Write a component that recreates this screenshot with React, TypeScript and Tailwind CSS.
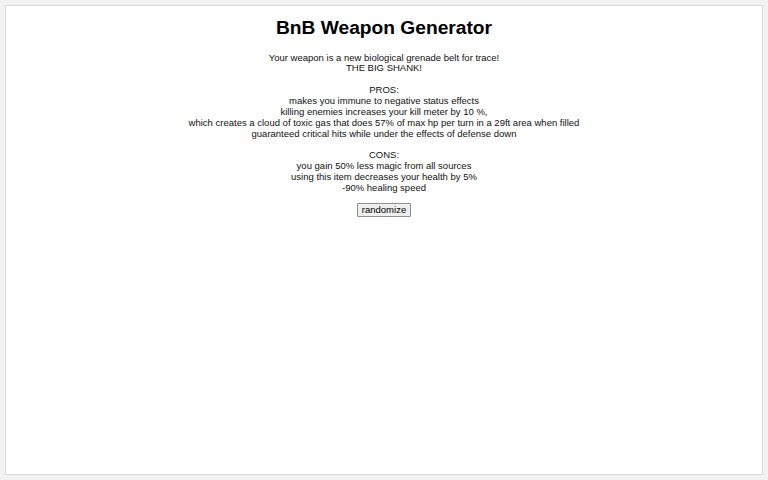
import React, { useState } from "react";

interface Weapon {
  intro: string;
  name: string;
  pros: string[];
  cons: string[];
}

const initialWeapon: Weapon = {
  intro: "Your weapon is a new biological grenade belt for trace!",
  name: "THE BIG SHANK!",
  pros: [
    "makes you immune to negative status effects",
    "killing enemies increases your kill meter by 10 %,",
    "which creates a cloud of toxic gas that does 57% of max hp per turn in a 29ft area when filled",
    "guaranteed critical hits while under the effects of defense down",
  ],
  cons: [
    "you gain 50% less magic from all sources",
    "using this item decreases your health by 5%",
    "-90% healing speed",
  ],
};

export default function App() {
  const [weapon, setWeapon] = useState<Weapon>(initialWeapon);

  // Shuffle the pros/cons order so the button does something visible
  const randomize = () => {
    setWeapon(prev => ({
      ...prev,
      pros: [...prev.pros].sort(() => Math.random() - 0.5),
      cons: [...prev.cons].sort(() => Math.random() - 0.5),
    }));
  };

  return (
    <div className="min-h-screen bg-[#f2f2f2] p-[5px] font-['Liberation_Sans',Arial,sans-serif] text-black">
      <div className="h-[470px] bg-white border border-[#dcdcdc] text-center">
        <h1 className="mt-[11px] mb-[13.6px] text-[19.2px] leading-[22px] font-bold">
          BnB Weapon Generator
        </h1>

        <div className="text-[9.5px] leading-[10.85px] text-[#111]">
          <div>{weapon.intro}</div>
          <div>{weapon.name}</div>
          <div className="h-[10.85px]"></div>
          <div>PROS:</div>
          {weapon.pros.map(p => (
            <div key={p}>{p}</div>
          ))}
          <div className="h-[10.85px]"></div>
          <div>CONS:</div>
          {weapon.cons.map(c => (
            <div key={c}>{c}</div>
          ))}
        </div>

        <button
          onClick={randomize}
          className="mt-[9.5px] h-[14px] px-[4px] text-[9.5px] leading-[12px] bg-[#efefef] border border-[#8f8f8f] rounded-[1px] text-black"
        >
          randomize
        </button>
      </div>
    </div>
  );
}
